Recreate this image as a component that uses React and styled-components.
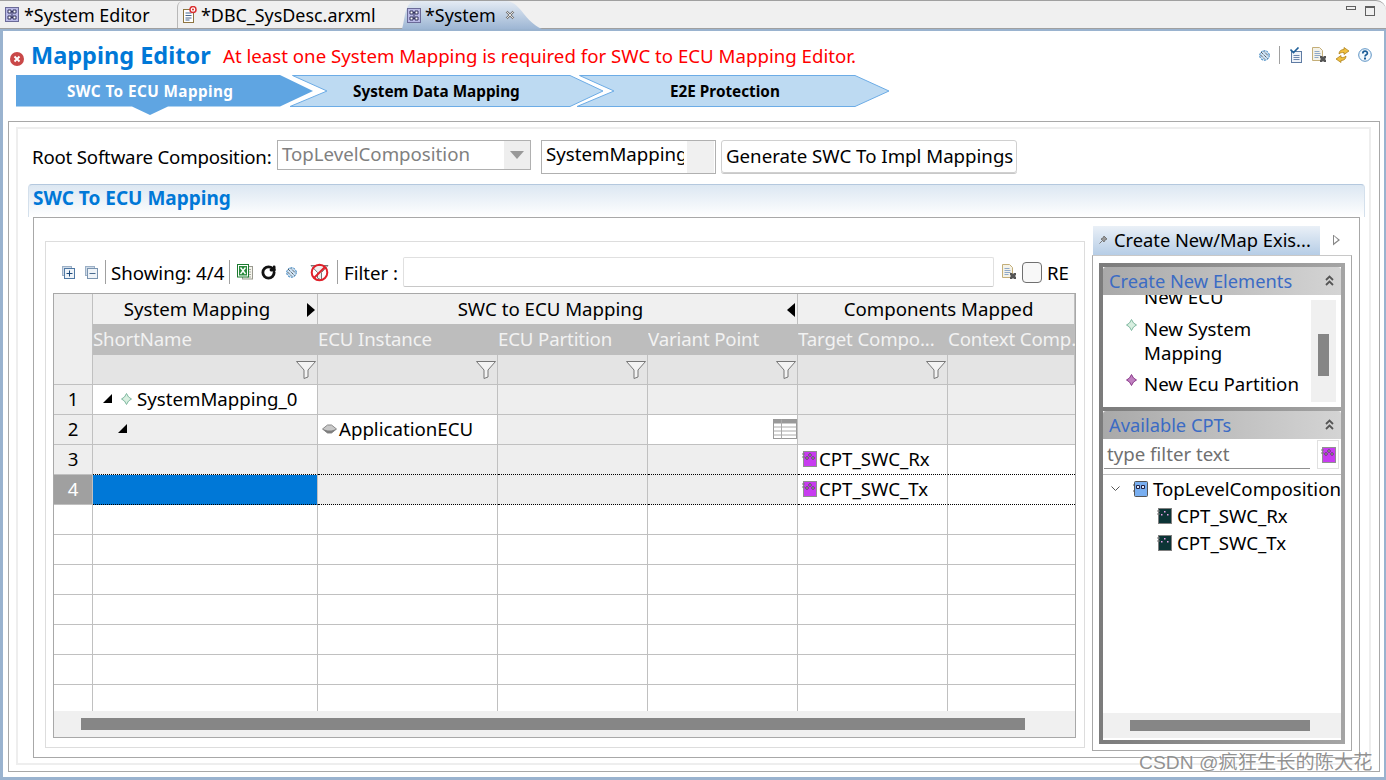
import React from 'react';
import styled, { createGlobalStyle } from 'styled-components';
import { RotateCw } from 'lucide-react';

const GlobalStyle = createGlobalStyle`
  * { box-sizing: border-box; }
  html, body { margin: 0; padding: 0; background: #fff; }
  body {
    font-family: "Noto Sans", "Open Sans", sans-serif;
    font-size: 18.67px;
    color: #000;
  }
`;

const Page = styled.div`
  position: relative;
  width: 1386px;
  height: 780px;
  display: flex;
  flex-direction: column;
  overflow: hidden;
`;

/* ---- editor tabs ---- */
const TabBar = styled.div`
  height: 29px;
  flex: none;
  display: flex;
  font-size: 17.9px;
  background: #f0f0f0;
  border-top: 1px solid #a0a0a0;
  border-bottom: 1px solid #a0a0a0;
  border-top-right-radius: 10px;
`;
const Tab = styled.div`
  width: ${p => p.$w}px;
  display: flex;
  align-items: center;
  gap: ${p => p.$gap}px;
  padding-left: 5px;
  border-left: ${p => (p.$first ? 'none' : '1px solid #b8b8b8')};
  border-top-left-radius: 6px;
  white-space: nowrap;
`;
const ActiveTab = styled.div`
  width: 140px;
  margin-bottom: -1px;
  display: flex;
  align-items: center;
  padding-left: 5px;
  gap: 4px;
  background: linear-gradient(#e4ebf4, #9db6d4);
  clip-path: path('M0 28 C3 20 2 0 14 0 L104 0 C118 0 122 20 140 28 Z');
`;
const WinButtons = styled.div`
  margin-left: auto;
  display: flex;
  align-items: flex-start;
  gap: 9px;
  padding: 5px 11px 0 0;
`;
const MinButton = styled.div`
  width: 10px;
  height: 4px;
  border: 1px solid #606060;
`;
const MaxButton = styled.div`
  width: 10px;
  height: 10px;
  border: 1px solid #606060;
  border-top-width: 2px;
`;

/* ---- editor ---- */
const Editor = styled.div`
  flex: 1;
  min-height: 0;
  display: flex;
  flex-direction: column;
  border: 3px solid #9ab3cf;
  border-top-width: 2px;
  border-right-width: 2px;
  background: #fff;
`;
const HeaderRow = styled.div`
  height: 44px;
  flex: none;
  display: flex;
  align-items: center;
  padding: 4px 12px 0 7px;
`;
const Title = styled.div`
  font-size: 23.5px;
  font-weight: 700;
  color: #0078d7;
  margin-left: 7px;
  width: 192px;
  white-space: nowrap;
`;
const ErrorText = styled.div`
  color: #ff0000;
  white-space: nowrap;
  padding-top: 1px;
`;
const HeaderTools = styled.div`
  margin-left: auto;
  display: flex;
  align-items: center;
`;
const ToolSep = styled.div`
  width: 1px;
  height: ${p => p.$h || 24}px;
  background: #a0a0a0;
  margin-left: ${p => p.$ml || 0}px;
  flex: none;
`;
const Stepper = styled.div`
  height: 46px;
  flex: none;
  display: flex;
  margin-left: 13px;
`;
const Step = styled.div`
  position: relative;
  width: ${p => p.$w}px;
  margin-left: ${p => p.$ml || 0}px;
  height: 32px;
  padding-left: ${p => p.$pad}px;
  font-size: 15.3px;
  font-weight: 700;
  line-height: 33px;
  letter-spacing: ${p => (p.$active ? '0.4px' : '0')};
  color: ${p => (p.$active ? '#fff' : '#000')};
  white-space: nowrap;
  z-index: ${p => p.$z || 0};
`;
const StepShape = styled.svg`
  position: absolute;
  left: 0;
  top: 0;
  overflow: visible;
  z-index: -1;
`;

const Frame = styled.div`
  flex: 1;
  min-height: 0;
  margin: 0 4px 5px 5px;
  border: 1px solid #a8a8a8;
  padding: 5px 8px 6px 7px;
  display: flex;
`;
const Light = styled.div`
  flex: 1;
  min-width: 0;
  border: 2px solid #eee;
  padding: 10px 4px 5px 10px;
  display: flex;
  flex-direction: column;
`;
const CompRow = styled.div`
  height: 35px;
  flex: none;
  margin-bottom: 10px;
  padding-left: 5px;
  display: flex;
  align-items: center;
  white-space: nowrap;
`;
const CompLabel = styled.div`
  width: 240px;
  letter-spacing: -0.2px;
  flex: none;
  margin-left: -1px;
  margin-right: 1px;
`;
const Combo = styled.div`
  width: 254px;
  height: 30px;
  margin-left: 4px;
  align-self: flex-start;
  margin-top: 1px;
  border: 1px solid #b0b0b0;
  display: flex;
  align-items: center;
  color: #808080;
  padding-left: 4px;
`;
const ComboText = styled.div`
  padding-bottom: 4px;
`;
const ComboArrow = styled.div`
  margin-left: auto;
  width: 26px;
  height: 28px;
  background: #eee;
  display: flex;
  align-items: center;
  justify-content: center;
  &::after {
    content: '';
    border-left: 7px solid transparent;
    border-right: 7px solid transparent;
    border-top: 8px solid #999;
  }
`;
const NameBox = styled.div`
  width: 175px;
  height: 34px;
  margin-left: 10px;
  border: 1px solid #b0b0b0;
  display: flex;
  align-items: center;
  padding-left: 4px;
`;
const NameText = styled.div`
  width: 138px;
  overflow: hidden;
  padding-bottom: 6px;
`;
const NameFill = styled.div`
  width: 27px;
  height: 32px;
  margin-left: 3px;
  background: #f0f0f0;
`;
const GenButton = styled.div`
  width: 296px;
  height: 33px;
  margin-left: 5px;
  border: 1px solid #d0d0d0;
  border-radius: 3px;
  display: flex;
  align-items: center;
  padding: 0 0 2px 4px;
  box-shadow: 0 1px 0 #c8c8c8;
`;

const Section = styled.div`
  flex: 1;
  min-height: 0;
  display: flex;
  flex-direction: column;
`;
const SectionHead = styled.div`
  height: 33px;
  flex: none;
  padding: 0 0 6px 4px;
  display: flex;
  align-items: center;
  font-size: 19px;
  font-weight: 700;
  color: #0078d7;
  background: linear-gradient(#dce7f2, #fff);
  border-top: 1px solid #b4c8de;
  border-left: 1px solid #d4e0ec;
  border-right: 1px solid #d4e0ec;
  border-radius: 4px 4px 0 0;
`;
const SectionBody = styled.div`
  flex: 1;
  min-height: 0;
  margin: 0 5px 0 5px;
  border: 1px solid #a8a8a8;
  padding: 7px 0 0 11px;
  display: flex;
  align-items: flex-start;
  gap: 7px;
`;

/* ---- left: table ---- */
const LeftPanel = styled.div`
  width: 1040px;
  height: 507px;
  margin-top: 16px;
  flex: none;
  border: 1px solid #ddd;
  padding: 15px 7px 0 7px;
`;
const Toolbar = styled.div`
  height: 36px;
  padding-bottom: 6px;
  display: flex;
  align-items: center;
  white-space: nowrap;
`;
const ToolLabel = styled.div`
  width: ${p => p.$w}px;
  margin-left: ${p => p.$ml}px;
  flex: none;
`;
const RefreshIcon = styled(RotateCw)`
  flex: none;
  margin-left: 8px;
`;
const FilterInput = styled.div`
  flex: 1;
  height: 30px;
  margin-left: 6px;
  border: 1px solid #e0e0e0;
  border-bottom-color: #c8c8c8;
  border-radius: 2px;
`;
const CheckBox = styled.div`
  width: 20px;
  height: 21px;
  margin-left: 5px;
  border: 1px solid #707070;
  border-radius: 4px;
  background: #f8f8f8;
  flex: none;
`;
const Table = styled.div`
  width: 1023px;
  height: 445px;
  border: 1px solid #a8a8a8;
  display: flex;
  flex-direction: column;
`;
const Grid = styled.div`
  flex: 1;
  min-height: 0;
  overflow: hidden;
  display: grid;
  grid-template-columns: 39px 225px 180px 150px 150px 150px 127px;
  grid-template-rows: 30px 31px 30px;
  grid-auto-rows: 30px;
`;
const Corner = styled.div`
  grid-row: 1 / 4;
  background: #eee;
  border-right: 1px solid #c0c0c0;
  border-bottom: 1px solid #c0c0c0;
`;
const GroupHead = styled.div`
  grid-column: span ${p => p.$span};
  background: #f0f0f0;
  border-right: 1px solid #c0c0c0;
  position: relative;
  display: flex;
  align-items: center;
  justify-content: center;
  padding: 0 ${p => p.$pr || 0}px 2px ${p => p.$pl || 0}px;
  white-space: nowrap;
`;
const HeadArrow = styled.div`
  position: absolute;
  top: 9px;
  right: 2px;
  border-top: 7px solid transparent;
  border-bottom: 7px solid transparent;
  ${p => (p.$dir === 'right' ? 'border-left: 8px solid #000;' : 'border-right: 8px solid #000;')}
`;
const NameHead = styled.div`
  background: #bdbdbd;
  color: #f2f2f2;
  display: flex;
  align-items: center;
  padding-bottom: 2px;
  letter-spacing: -0.15px;
  white-space: nowrap;
  overflow: hidden;
`;
const FilterCell = styled.div`
  background: #e4e4e4;
  border-right: 1px solid #c0c0c0;
  border-bottom: 1px solid #c0c0c0;
  display: flex;
  align-items: center;
  justify-content: flex-end;
  padding-right: 1px;
`;
const RowHead = styled.div`
  background: ${p => (p.$selected ? '#a0a0a0' : p.$filled ? '#eee' : '#fff')};
  color: ${p => (p.$selected ? '#fff' : '#000')};
  border-right: 1px solid #c0c0c0;
  border-bottom: 1px solid #c0c0c0;
  padding-bottom: 2px;
  display: flex;
  align-items: center;
  justify-content: center;
`;
const Cell = styled.div`
  background: ${p => p.$bg || '#fff'};
  border-right: ${p => (p.$last ? 'none' : '1px solid #c0c0c0')};
  border-bottom: ${p => (p.$dotted ? '1px dotted #000' : '1px solid #c0c0c0')};
  display: flex;
  align-items: center;
  padding: 0 0 2px ${p => p.$pad || 0}px;
  justify-content: ${p => (p.$end ? 'flex-end' : 'flex-start')};
  white-space: nowrap;
  overflow: hidden;
`;
const CellText = styled.span`
  margin-left: ${p => p.$ml}px;
`;
const TreeArrow = styled.span`
  width: 0;
  height: 0;
  flex: none;
  border-left: 9px solid transparent;
  border-bottom: 9px solid #000;
  margin-right: ${p => p.$mr || 0}px;
`;
const HScroll = styled.div`
  height: ${p => p.$h}px;
  flex: none;
  background: #f0f0f0;
  padding: ${p => p.$top}px 0 0 ${p => p.$left}px;
`;
const HThumb = styled.div`
  width: ${p => p.$w}px;
  height: ${p => p.$h}px;
  background: #868686;
`;

/* ---- right: create / map ---- */
const RightPanel = styled.div`
  width: 260px;
  height: 526px;
  flex: none;
  display: flex;
  flex-direction: column;
`;
const RightTabRow = styled.div`
  height: 30px;
  flex: none;
  display: flex;
  align-items: center;
`;
const RightTab = styled.div`
  width: 227px;
  height: 29px;
  margin-left: 1px;
  padding: 0 0 2px 6px;
  display: flex;
  align-items: center;
  gap: 5px;
  font-size: 18.3px;
  background: linear-gradient(#eaf0f7, #b6cde6);
  white-space: nowrap;
`;
const PlayOutline = styled.div`
  margin-left: 13px;
  width: 7px;
  height: 11px;
  background: #888;
  clip-path: polygon(0 0, 100% 50%, 0 100%, 0 85%, 72% 50%, 14% 14%, 14% 86%, 0 100%);
`;
const RightBody = styled.div`
  flex: 1;
  min-height: 0;
  border: 1px solid #a8a8a8;
  border-top-color: #c8c8c8;
  padding: 7px 6px 6px 6px;
  display: flex;
`;
const GrayBox = styled.div`
  flex: 1;
  min-width: 0;
  border: 4px solid;
  border-image: linear-gradient(90deg, #7c7c7c, #a4a4a4) 1;
  display: flex;
  flex-direction: column;
`;
const PaneHead = styled.div`
  height: 28px;
  flex: none;
  padding: 0 7px 2px 6px;
  display: flex;
  align-items: center;
  justify-content: space-between;
  color: #3b6bc4;
  font-size: 18.3px;
  background: linear-gradient(90deg, #a9a9a9, #d4d4d4);
  border-radius: 3px 3px 0 0;
`;
const CreatePane = styled.div`
  height: 144px;
  flex: none;
  display: flex;
  flex-direction: column;
  border-bottom: 4px solid;
  border-image: linear-gradient(90deg, #7c7c7c, #a4a4a4) 1;
`;
const CreateBody = styled.div`
  flex: 1;
  min-height: 0;
  display: flex;
  overflow: hidden;
`;
const CreateList = styled.div`
  flex: 1;
  margin-top: -10px;
  padding-left: 23px;
`;
const CreateItem = styled.div`
  display: flex;
  gap: 7px;
  line-height: 24px;
  margin-bottom: ${p => p.$mb || 0}px;
`;
const CreateText = styled.div`
  width: 156px;
`;
const VScroll = styled.div`
  width: 25px;
  margin: 5px 5px 5px 0;
  background: #f0f0f0;
  padding: 34px 7px 0;
  flex: none;
`;
const VThumb = styled.div`
  height: 42px;
  background: #868686;
`;
const CptPane = styled.div`
  flex: 1;
  min-height: 0;
  display: flex;
  flex-direction: column;
`;
const FilterRow = styled.div`
  height: 36px;
  flex: none;
  display: flex;
  align-items: flex-start;
  padding: 1px 0 0 1px;
  border-bottom: 1px solid #c0c0c0;
`;
const FilterText = styled.div`
  width: 206px;
  height: 29px;
  padding-left: 3px;
  line-height: 28px;
  color: #707070;
  border-bottom: 1px solid #909090;
`;
const FilterButton = styled.div`
  width: 22px;
  height: 29px;
  margin-left: 7px;
  border: 1px solid #e0e0e0;
  display: flex;
  align-items: center;
  justify-content: center;
`;
const TreeArea = styled.div`
  flex: 1;
  min-height: 0;
  overflow: hidden;
`;
const TreeRow = styled.div`
  height: 27px;
  display: flex;
  align-items: center;
  gap: 5px;
  padding-left: ${p => p.$pad}px;
  white-space: nowrap;
`;
const Chevron = styled.svg`
  margin-right: 8px;
  flex: none;
`;
const PaneFoot = styled.div`
  height: 2px;
  flex: none;
`;
const Watermark = styled.div`
  position: absolute;
  left: 1139px;
  top: 747px;
  font-family: "Liberation Sans", "Noto Sans CJK SC", sans-serif;
  font-size: 19.25px;
  color: rgba(110, 110, 110, 0.75);
  text-shadow: 0 0 2px #fff;
  white-space: nowrap;
`;

/* ---- icons ---- */
const Ico = styled.svg`
  flex: none;
  display: block;
  margin-left: ${p => p.$ml || 0}px;
  margin-top: ${p => p.$mt || 0}px;
`;
const SystemIcon = () => (
  <Ico width="14" height="15" viewBox="0 0 14 15">
    <rect x="0.5" y="0.5" width="13" height="14" fill="#b9b9e6" stroke="#6a6a98" />
    <path d="M3 3h3v3h-3zM8 3h3v3h-3zM3 9h3v3h-3zM8 9h3v3h-3z" fill="#fff" stroke="#33335c" />
    <path d="M6 4.5h2M6 10.5h2M7 4.5v6" stroke="#33335c" fill="none" />
  </Ico>
);
const ArxmlIcon = () => (
  <Ico width="14" height="17" viewBox="0 0 14 17">
    <rect x="0.5" y="3.5" width="10" height="13" fill="#fff" stroke="#8d7440" />
    <path d="M2.5 7h6M2.5 9.5h6M2.5 12h6M2.5 14h4" stroke="#44658f" />
    <circle cx="10" cy="3.5" r="3" fill="#fff" stroke="#d93030" strokeWidth="1.5" />
    <circle cx="10" cy="3.5" r="1" fill="#d93030" />
  </Ico>
);
const CloseIcon = () => (
  <Ico $ml={5} width="10" height="10" viewBox="0 0 10 10">
    <path d="M1.5 1.5l7 7M8.5 1.5l-7 7" stroke="#777" strokeWidth="2.4" />
    <path d="M1.5 1.5l7 7M8.5 1.5l-7 7" stroke="#fff" strokeWidth="0.8" />
  </Ico>
);
const ErrorIcon = () => (
  <Ico $mt={8} width="14" height="14" viewBox="0 0 14 14">
    <circle cx="7" cy="7" r="7" fill="#c94848" />
    <path d="M4.5 4.5l5 5M9.5 4.5l-5 5" stroke="#fff" strokeWidth="1.9" />
  </Ico>
);
const DotGlobe = ({ ml }) => (
  <Ico $ml={ml} width="11" height="11" viewBox="0 0 11 11">
    <circle cx="5.5" cy="5.5" r="4.8" fill="#cfe4f6" stroke="#2a78b8" strokeDasharray="2 1" />
    <path d="M2 2l7 7M5 1.5l4.500 4.500M1.500 5l4.500 4.500" stroke="#222" strokeDasharray="1 1" />
  </Ico>
);
const ChecklistIcon = () => (
  <Ico $ml={10} width="12" height="16" viewBox="0 0 12 16">
    <rect x="1.5" y="4.5" width="10" height="11" fill="#eef2f8" stroke="#5e7ba3" />
    <path d="M3.5 8.5h6M3.5 10.5h6M3.5 12.5h6" stroke="#6c86ad" />
    <path d="M0.5 2.5l3 3 5-5" fill="none" stroke="#1f5f99" strokeWidth="1.6" />
  </Ico>
);
const DocCrossIcon = ({ ml }) => (
  <Ico $ml={ml} width="15" height="16" viewBox="0 0 15 16">
    <path d="M0.5 0.5h7l3 3v10h-10z" fill="#f4f2e8" stroke="#c4ae78" />
    <path d="M2.5 4.5h5M2.5 6.5h6M2.5 8.5h6M2.5 10.5h4" stroke="#8fa8c8" />
    <path d="M8 9h2l1 1 1-1h2v2l-1 1 1 1v2h-2l-1-1-1 1h-2v-2l1-1-1-1z" fill="#555" />
  </Ico>
);
const SyncIcon = () => (
  <Ico $ml={8} width="15" height="16" viewBox="0 0 15 16">
    <path d="M4 7c0-3 2-4.500 5-4.500V0.500l5 3.500-5 3.500V5.500c-2 0-3.500 0-5 1.500z" fill="#f0c040" stroke="#a87810" strokeWidth="0.7" />
    <path d="M11 9c0 3-2 4.500-5 4.500v2l-5-3.500 5-3.500v2c2 0 3.500 0 5-1.500z" fill="#f0c040" stroke="#a87810" strokeWidth="0.7" />
  </Ico>
);
const HelpIcon = () => (
  <Ico $ml={8} width="14" height="14" viewBox="0 0 14 14">
    <circle cx="7" cy="7" r="6.3" fill="#f4f8fc" stroke="#5a92c4" />
    <path d="M4.800 5.400c0-3 4.600-3 4.600-.2 0 1.600-2.400 1.600-2.400 3.400" fill="none" stroke="#1c5c96" strokeWidth="1.7" />
    <rect x="6" y="9.500" width="2" height="2" fill="#1c5c96" />
  </Ico>
);
const ExpandIcon = ({ ml, minus }) => (
  <Ico $ml={ml} width="13" height="13" viewBox="0 0 13 13">
    <rect x="0.500" y="0.500" width="9" height="9" fill="#cfdbe8" stroke="#9cb0c6" />
    <rect x="2.500" y="2.500" width="10" height="10" fill="#eef3f8" stroke={minus ? '#7a94b0' : '#4f78a4'} />
    <path d={minus ? 'M4.500 7.500h6' : 'M4.500 7.500h6M7.500 4.500v6'} stroke={minus ? '#4a6c90' : '#1c4a7c'} />
  </Ico>
);
const ExcelIcon = () => (
  <Ico $ml={7} width="16" height="16" viewBox="0 0 16 16">
    <rect x="5.500" y="2.500" width="10" height="12.500" fill="#f4f4ec" stroke="#9a9a90" />
    <path d="M10 5.500h4M10 8h4M10 10.500h4M10 13h4" stroke="#a8a8a0" />
    <rect x="0.500" y="0.500" width="11" height="12.500" fill="#fff" stroke="#1d7a30" />
    <rect x="2" y="2" width="8" height="9.500" fill="#2a8a3c" />
    <path d="M3.500 3.500l5 6.500M8.500 3.500l-5 6.500" stroke="#fff" strokeWidth="1.4" />
  </Ico>
);
const ForbidIcon = () => (
  <Ico $ml={13} width="19" height="19" viewBox="0 0 19 19">
    <path d="M1 2.500h17l-6.500 7v7.500l-4-2v-5.500z" fill="#f0f0f0" stroke="#777" />
    <circle cx="9.500" cy="9.500" r="7.800" fill="none" stroke="#e0212a" strokeWidth="2" />
    <path d="M4 15l11-11" stroke="#e0212a" strokeWidth="2" />
  </Ico>
);
const FunnelIcon = () => (
  <Ico width="20" height="18" viewBox="0 0 20 18">
    <path d="M0.500 0.500h19l-7.500 8.500v7l-4 1.500v-8.500z" fill="#f4f4f4" stroke="#777" />
  </Ico>
);
const Diamond = ({ color, fill, mt }) => (
  <Ico $mt={mt} width="11" height="12" viewBox="0 0 11 12">
    <path d="M5.500 0.500L7.500 4 10.500 6 7.500 8 5.500 11.500 3.500 8 0.500 6 3.500 4z" fill={fill} stroke={color} strokeWidth="1" />
  </Ico>
);
const EcuIcon = () => (
  <Ico width="15" height="10" viewBox="0 0 15 10">
    <path d="M0.500 5l5-4h4l5 4-5 4h-4z" fill="#c8c8c8" stroke="#8a8a8a" />
    <path d="M0.500 5l5 1.500h4l5-1.500-5 4h-4z" fill="#7e7e7e" />
  </Ico>
);
const TableIcon = () => (
  <Ico width="24" height="20" viewBox="0 0 24 20">
    <rect x="0.500" y="0.500" width="23" height="19" fill="#fff" stroke="#999" />
    <rect x="0.500" y="0.500" width="23" height="4" fill="#999" />
    <path d="M0.500 8h23M0.500 12h23M0.500 16h23M8.500 0.500v19" stroke="#aaa" />
  </Ico>
);
const CptIcon = () => (
  <Ico width="15" height="16" viewBox="0 0 15 16">
    <rect x="1.500" y="0.500" width="13" height="15" fill="#c83cf0" stroke="#909090" />
    <path d="M0 3h3M0 6h3" stroke="#777" />
    <path d="M7 3h2v2h-2zM4 6h2v2h-2zM10 6h2v2h-2z" fill="#fff" stroke="#333" strokeWidth="0.8" />
  </Ico>
);
const CompositionIcon = () => (
  <Ico width="15" height="16" viewBox="0 0 15 16">
    <rect x="1.500" y="0.500" width="13" height="15" rx="1" fill="#78aef0" stroke="#555" />
    <path d="M3.500 4.500h3v3h-3zM8.500 4.500h3v3h-3z" fill="#dceaff" stroke="#224" />
    <path d="M0 4h2M0 10h2" stroke="#555" />
  </Ico>
);
const DarkCptIcon = () => (
  <Ico width="15" height="16" viewBox="0 0 15 16">
    <rect x="1.500" y="0.500" width="13" height="15" fill="#0c3436" stroke="#808080" />
    <path d="M0 3h3M0 6h3" stroke="#777" />
    <path d="M7 3h1.500v1.500h-1.500zM4 6h1.500v1.500h-1.500zM10 6h1.500v1.500h-1.500z" fill="#e8a0e8" />
  </Ico>
);
const PinIcon = () => (
  <Ico width="10" height="10" viewBox="0 0 10 10">
    <path d="M5 2l3 3-2 1-1 2-3-3 2-1zM3 7l-2.500 2.500" fill="#999" stroke="#777" />
  </Ico>
);
const CollapseUp = () => (
  <Ico width="9" height="11" viewBox="0 0 9 11">
    <path d="M1 5l3.500-3.500 3.500 3.500M1 10l3.500-3.500 3.500 3.500" fill="none" stroke="#555" strokeWidth="1.800" />
  </Ico>
);

const steps = [
  { label: 'SWC To ECU Mapping', w: 297, pad: 51, active: true, z: 3 },
  { label: 'System Data Mapping', w: 311, ml: -21, pad: 61, z: 2 },
  { label: 'E2E Protection', w: 310, ml: -24, pad: 91, z: 1 },
];
const shapes = [
  { d: 'M0 0H264L297 16L264 31.500H152L134 40L116 31.500H0Z', fill: '#5fa5e2', stroke: 'none' },
  { d: 'M0.500 0.500H278L311 16L278 31.500H-2L35 16Z', fill: '#bddaf2', stroke: '#6cace6' },
  { d: 'M0.500 0.500H276L310 16L276 31.500H-2L35 16Z', fill: '#bddaf2', stroke: '#6cace6' },
];

const columns = [
  { name: 'ShortName' },
  { name: 'ECU Instance' },
  { name: 'ECU Partition' },
  { name: 'Variant Point' },
  { name: 'Target Compo...' },
  { name: 'Context Comp.' },
];

const GRAY = '#eee';
// one entry per table row, colours left to right
const rows = [
  { head: '1', bg: ['#fff', GRAY, GRAY, GRAY, GRAY, GRAY] },
  { head: '2', bg: [GRAY, '#fff', GRAY, '#fff', GRAY, GRAY] },
  { head: '3', bg: [GRAY, GRAY, GRAY, GRAY, '#fff', '#fff'], dotted: true },
  { head: '4', bg: ['#0078d7', GRAY, GRAY, GRAY, '#fff', '#fff'], dotted: true, selected: true },
  ...Array.from({ length: 7 }, () => ({ head: '', bg: Array(6).fill('#fff') })),
];

function cellContent(r, c) {
  if (r === 0 && c === 0) return (
    <>
      <TreeArrow $mr={9} />
      <Diamond color="#7fb8a0" fill="#d8efe0" />
      <CellText $ml={5}>SystemMapping_0</CellText>
    </>
  );
  if (r === 1 && c === 0) return <TreeArrow />;
  if (r === 1 && c === 1) return (<><EcuIcon /><CellText $ml={2}>ApplicationECU</CellText></>);
  if (r === 1 && c === 3) return <TableIcon />;
  if (r === 2 && c === 4) return (<><CptIcon /><CellText $ml={2}>CPT_SWC_Rx</CellText></>);
  if (r === 3 && c === 4) return (<><CptIcon /><CellText $ml={2}>CPT_SWC_Tx</CellText></>);
  return null;
}

function cellPad(r, c) {
  if (r === 0 && c === 0) return 10;
  if (r === 1 && c === 0) return 25;
  if (c === 1 || c === 4) return 4;
  return 0;
}

export default function App() {
  return (
    <Page>
      <GlobalStyle />
      <TabBar>
        <Tab $w={177} $gap={5} $first>
          <SystemIcon />*System Editor
        </Tab>
        <Tab $w={225} $gap={4}>
          <ArxmlIcon />*DBC_SysDesc.arxml
        </Tab>
        <ActiveTab>
          <SystemIcon />*System
          <CloseIcon />
        </ActiveTab>
        <WinButtons>
          <MinButton />
          <MaxButton />
        </WinButtons>
      </TabBar>

      <Editor>
        <HeaderRow>
          <ErrorIcon />
          <Title>Mapping Editor</Title>
          <ErrorText>At least one System Mapping is required for SWC to ECU Mapping Editor.</ErrorText>
          <HeaderTools>
            <DotGlobe />
            <ToolSep $ml={9} $h={18} />
            <ChecklistIcon />
            <DocCrossIcon ml={10} />
            <SyncIcon />
            <HelpIcon />
          </HeaderTools>
        </HeaderRow>

        <Stepper>
          {steps.map((s, i) => (
            <Step key={s.label} $w={s.w} $ml={s.ml} $pad={s.pad} $active={s.active} $z={s.z}>
              <StepShape width={s.w} height="40">
                <path d={shapes[i].d} fill={shapes[i].fill} stroke={shapes[i].stroke} />
              </StepShape>
              {s.label}
            </Step>
          ))}
        </Stepper>

        <Frame>
          <Light>
            <CompRow>
              <CompLabel>Root Software Composition:</CompLabel>
              <Combo>
                <ComboText>TopLevelComposition</ComboText>
                <ComboArrow />
              </Combo>
              <NameBox>
                <NameText>SystemMapping_0</NameText>
                <NameFill />
              </NameBox>
              <GenButton>Generate SWC To Impl Mappings</GenButton>
            </CompRow>

            <Section>
              <SectionHead>SWC To ECU Mapping</SectionHead>
              <SectionBody>
                <LeftPanel>
                  <Toolbar>
                    <ExpandIcon ml={9} />
                    <ExpandIcon ml={10} minus />
                    <ToolSep $ml={7} />
                    <ToolLabel $w={113} $ml={5}>Showing: 4/4</ToolLabel>
                    <ToolSep $ml={5} />
                    <ExcelIcon />
                    <RefreshIcon size={15} strokeWidth={4.5} color="#111" />
                    <DotGlobe ml={10} />
                    <ForbidIcon />
                    <ToolSep $ml={8} />
                    <ToolLabel $w={53} $ml={6}>Filter :</ToolLabel>
                    <FilterInput />
                    <DocCrossIcon ml={8} />
                    <CheckBox />
                    <ToolLabel $w={30} $ml={5}>RE</ToolLabel>
                  </Toolbar>
                  <Table>
                    <Grid>
                      <Corner />
                      <GroupHead $span={1} $pr={16}>System Mapping<HeadArrow $dir="right" /></GroupHead>
                      <GroupHead $span={3} $pr={14}>SWC to ECU Mapping<HeadArrow $dir="left" /></GroupHead>
                      <GroupHead $span={2} $pl={5}>Components Mapped</GroupHead>
                      {columns.map(c => <NameHead key={c.name}>{c.name}</NameHead>)}
                      {columns.map((c, i) => (
                        <FilterCell key={c.name}>{i < 5 && <FunnelIcon />}</FilterCell>
                      ))}
                      {rows.map((row, r) => (
                        <React.Fragment key={r}>
                          <RowHead $filled={!!row.head} $selected={row.selected}>{row.head}</RowHead>
                          {row.bg.map((bg, c) => (
                            <Cell
                              key={c}
                              $bg={bg}
                              $dotted={row.dotted}
                              $last={c === 5}
                              $pad={cellPad(r, c)}
                              $end={r === 1 && c === 3}
                            >
                              {cellContent(r, c)}
                            </Cell>
                          ))}
                        </React.Fragment>
                      ))}
                    </Grid>
                    <HScroll $h={26} $top={7} $left={27}>
                      <HThumb $w={944} $h={12} />
                    </HScroll>
                  </Table>
                </LeftPanel>

                <RightPanel>
                  <RightTabRow>
                    <RightTab>
                      <PinIcon />
                      Create New/Map Exis...
                    </RightTab>
                    <PlayOutline />
                  </RightTabRow>
                  <RightBody>
                    <GrayBox>
                      <CreatePane>
                        <PaneHead>Create New Elements<CollapseUp /></PaneHead>
                        <CreateBody>
                          <CreateList>
                            <CreateItem $mb={8}>
                              <Diamond color="#8090a0" fill="#d0d8e0" mt={-6} />
                              <CreateText>New ECU</CreateText>
                            </CreateItem>
                            <CreateItem $mb={7}>
                              <Diamond color="#7fb8a0" fill="#d8efe0" mt={2} />
                              <CreateText>New System Mapping</CreateText>
                            </CreateItem>
                            <CreateItem>
                              <Diamond color="#8a3a8a" fill="#c080c0" mt={2} />
                              <CreateText>New Ecu Partition</CreateText>
                            </CreateItem>
                          </CreateList>
                          <VScroll><VThumb /></VScroll>
                        </CreateBody>
                      </CreatePane>
                      <CptPane>
                        <PaneHead>Available CPTs<CollapseUp /></PaneHead>
                        <FilterRow>
                          <FilterText>type filter text</FilterText>
                          <FilterButton><CptIcon /></FilterButton>
                        </FilterRow>
                        <TreeArea>
                          <TreeRow $pad={8}>
                            <Chevron width="9" height="6" viewBox="0 0 9 6">
                              <path d="M0.500 0.500l4 4 4-4" fill="none" stroke="#555" />
                            </Chevron>
                            <CompositionIcon />TopLevelComposition
                          </TreeRow>
                          <TreeRow $pad={54}><DarkCptIcon />CPT_SWC_Rx</TreeRow>
                          <TreeRow $pad={54}><DarkCptIcon />CPT_SWC_Tx</TreeRow>
                        </TreeArea>
                        <HScroll $h={25} $top={7} $left={27}>
                          <HThumb $w={180} $h={11} />
                        </HScroll>
                        <PaneFoot />
                      </CptPane>
                    </GrayBox>
                  </RightBody>
                </RightPanel>
              </SectionBody>
            </Section>
          </Light>
        </Frame>
      </Editor>
      <Watermark>CSDN @疯狂生长的陈大花</Watermark>
    </Page>
  );
}
